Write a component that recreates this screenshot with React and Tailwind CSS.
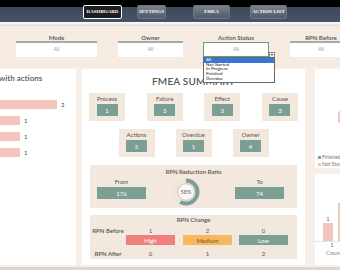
import React from "react";

const TEAL = "bg-[#7b9e95]";

function NavButton({ label, active, className }) {
  return (
    <div
      className={`h-[14px] flex items-center justify-center rounded-[2px] text-[5px] font-bold text-white whitespace-nowrap ${
        active
          ? "bg-[#1e1e1e] border border-white"
          : "bg-[linear-gradient(to_bottom,#7a828c,#505a66)] border border-[#6c7580]"
      } ${className}`}
      style={{ fontFamily: '"Liberation Serif", serif' }}
    >
      {label}
    </div>
  );
}

function Filter({ label, className, boxClass, children }) {
  return (
    <div className={`relative flex flex-col items-center pt-[8px] shrink-0 ${className}`}>
      <div className="text-[6px] leading-[7px] font-bold text-[#5c5c5c]">{label}</div>
      <div className={`w-full bg-white flex items-center justify-center text-[5px] text-[#9a9a9a] ${boxClass}`}>
        All
      </div>
      {children}
    </div>
  );
}

function Kpi({ label, value }) {
  return (
    <div className="w-[36px] h-[28px] bg-[#f3e8dd] flex flex-col items-center pt-[2px]">
      <div className="text-[6px] leading-[8px] text-[#555]">{label}</div>
      <div className={`mt-[1px] w-[21px] h-[12px] ${TEAL} text-white text-[6px] flex items-center justify-center`}>
        {value}
      </div>
    </div>
  );
}

function Donut() {
  const c = 2 * Math.PI * 11.5;
  return (
    <svg width="28" height="28" viewBox="0 0 28 28" className="shrink-0">
      <circle cx="14" cy="14" r="11.5" fill="none" stroke="#efe5db" strokeWidth="4" />
      <circle
        cx="14"
        cy="14"
        r="11.5"
        fill="none"
        stroke="#7b9e95"
        strokeWidth="4"
        strokeDasharray={`${c * 0.58} ${c}`}
        transform="rotate(-90 14 14)"
      />
      <circle cx="14" cy="14" r="8.3" fill="#fbf8f5" stroke="#a9a9a9" strokeWidth="0.6" />
      <text x="14" y="16" textAnchor="middle" fontSize="5.5" fill="#666">58%</text>
    </svg>
  );
}

export default function App() {
  return (
    <div
      className="w-[340px] h-[270px] overflow-hidden bg-[#f7efe8] flex flex-col"
      style={{ fontFamily: 'Lato, "DejaVu Sans", sans-serif' }}
    >
      {/* Nav */}
      <div className="h-[22px] shrink-0 flex items-start pt-[5px] pl-[83px] bg-[linear-gradient(to_bottom,#000_0,#000_7px,#3d4a5b_7px,#45536a_22px)]">
        <NavButton label="DASHBOARD" active className="w-[39px]" />
        <NavButton label="SETTINGS" className="w-[29px] ml-[15px]" />
        <NavButton label="FMEA" className="w-[37px] ml-[27px]" />
        <NavButton label="ACTION LIST" className="w-[37px] ml-[20px]" />
      </div>
      <div className="h-[4px] shrink-0 bg-[linear-gradient(to_bottom,#ffffff,#dcdcdc)]" />

      {/* Filters */}
      <div className="h-[41px] shrink-0 bg-[#f5ebe1] flex">
        <Filter label="Mode" className="w-[81px] ml-[16px]" boxClass="h-[16px] border-t-2 border-[#a3aea6]" />
        <Filter label="Owner" className="w-[65px] ml-[21px]" boxClass="h-[16px] border-t-2 border-[#a3aea6]" />
        <Filter label="Action Status" className="w-[66px] ml-[20px] z-10" boxClass="h-[15px] mt-[1px] border border-[#6f9b7c]">
          <div className="absolute left-[66px] top-[26px] w-[6px] h-[6px] bg-[#f0f0f0] border border-[#8a8a8a] flex items-center justify-center">
            <div className="w-0 h-0 border-l-[1.5px] border-r-[1.5px] border-t-[2px] border-l-transparent border-r-transparent border-t-[#333]" />
          </div>
          <div className="absolute left-0 top-[31px] w-[72px] h-[26px] bg-white border border-[#6a6a6a] text-[4.5px] leading-[4.7px] text-[#111]">
            <div className="bg-[#3875d7] text-white pl-[2px]">All</div>
            <div className="pl-[2px]">Not Started</div>
            <div className="pl-[2px]">In Progress</div>
            <div className="pl-[2px]">Finished</div>
            <div className="pl-[2px]">Overdue</div>
          </div>
        </Filter>
        <Filter label="RPN Before" className="w-[62px] ml-[21px]" boxClass="h-[16px] border-t-2 border-[#a3aea6]" />
      </div>

      {/* Main */}
      <div className="flex pt-[2px] shrink-0">
        {/* Left panel */}
        <div className="w-[76px] h-[196px] bg-white shrink-0 overflow-hidden">
          <div className="mt-[4px] -ml-[1px] text-[8px] leading-[10px] font-semibold text-[#555] whitespace-nowrap">
            with actions
          </div>
          <div className="mt-[17px] flex flex-col gap-[7px]">
            {[
              [57, "2"],
              [20, "1"],
              [20, "1"],
              [20, "1"],
            ].map(([w, v], i) => (
              <div key={i} className="flex items-center h-[9px]">
                <div className="h-[9px] bg-[#f4c5bf]" style={{ width: w }} />
                <span className="ml-[4px] text-[6px] text-[#444]">{v}</span>
              </div>
            ))}
          </div>
        </div>

        {/* Center panel */}
        <div className="w-[223px] h-[196px] bg-white ml-[6px] shrink-0 flex flex-col pt-[6px]">
          <div className="h-[12px] text-[10px] leading-[12px] text-center text-[#555] font-semibold tracking-[0.2px]">
            FMEA SUMMARY
          </div>
          <div className="mt-[6px] flex justify-between px-[7px]">
            <Kpi label="Process" value="1" />
            <Kpi label="Failure" value="3" />
            <Kpi label="Effect" value="3" />
            <Kpi label="Cause" value="3" />
          </div>
          <div className="mt-[8px] flex justify-center gap-[21px]">
            <Kpi label="Actions" value="5" />
            <Kpi label="Overdue" value="1" />
            <Kpi label="Owner" value="4" />
          </div>

          {/* RPN Reduction Ratio */}
          <div className="mt-[8px] mx-[8px] h-[43px] bg-[#f3e8dd] pt-[3px]">
            <div className="text-[6px] leading-[7px] text-center font-semibold text-[#555]">RPN Reduction Ratio</div>
            <div className="mt-[3px] flex items-start pl-[7px]">
              <div className="w-[49px] flex flex-col items-center">
                <div className="text-[6px] leading-[8px] text-[#555]">From</div>
                <div className={`mt-[1px] w-full h-[12px] ${TEAL} text-white text-[6px] flex items-center justify-center`}>176</div>
              </div>
              <div className="ml-[26px]">
                <Donut />
              </div>
              <div className="ml-[35px] w-[49px] flex flex-col items-center">
                <div className="text-[6px] leading-[8px] text-[#555]">To</div>
                <div className={`mt-[1px] w-full h-[12px] ${TEAL} text-white text-[6px] flex items-center justify-center`}>74</div>
              </div>
            </div>
          </div>

          {/* RPN Change */}
          <div className="mt-[7px] mx-[8px] h-[44px] bg-[#f3e8dd] pt-[1px] text-[6px] text-[#555]">
            <div className="leading-[7px] text-center font-semibold">RPN Change</div>
            <div className="mt-[4px] flex leading-[7px]">
              <span className="w-[36px] text-center font-semibold whitespace-nowrap">RPN Before</span>
              <span className="w-[49px] text-center">1</span>
              <span className="w-[49px] ml-[8px] text-center">2</span>
              <span className="w-[49px] ml-[7px] text-center">0</span>
            </div>
            <div className="mt-[1px] flex h-[10px]">
              <span className="w-[36px]" />
              <span className="w-[49px] bg-[#f08080] text-white flex items-center justify-center">High</span>
              <span className="w-[49px] ml-[8px] bg-[#f5b85f] text-[#7a5a2a] flex items-center justify-center">Medium</span>
              <span className="w-[49px] ml-[7px] bg-[#7b9e95] text-white flex items-center justify-center">Low</span>
            </div>
            <div className="mt-[5px] flex leading-[7px]">
              <span className="w-[36px] text-center font-semibold whitespace-nowrap">RPN After</span>
              <span className="w-[49px] text-center">0</span>
              <span className="w-[49px] ml-[8px] text-center">1</span>
              <span className="w-[49px] ml-[7px] text-center">2</span>
            </div>
          </div>
        </div>

        {/* Right panels */}
        <div className="ml-[10px] w-[40px] shrink-0 flex flex-col gap-[6px]">
          <div className="h-[99px] bg-white flex flex-col pl-[3px] overflow-hidden">
            <div className="mt-[42px] ml-[20px] w-[6px] h-[13px] bg-[#f4c5bf] rounded-l-[2px]" />
            <div className="mt-[31px] flex items-center gap-[1px] text-[5px] leading-[7px] text-[#777]">
              <span className="w-[3px] h-[3px] bg-[#7b9e95]" />
              Finished
            </div>
            <div className="flex items-center gap-[1px] text-[5px] leading-[7px] text-[#777]">
              <span className="w-[3px] h-[3px] bg-[#f4c5bf]" />
              Not Started
            </div>
          </div>
          <div className="h-[91px] bg-white overflow-hidden flex flex-col">
            <div className="mt-[29px] h-[38px] flex items-end pl-[8px] gap-[5px]">
              <div className="w-[10px] flex flex-col items-center">
                <span className="text-[5px] leading-[7px] text-[#444]">1</span>
                <div className="w-[10px] h-[18px] bg-[#f4c5bf]" />
              </div>
              <div className="w-[10px] h-[38px] bg-[#f4c5bf]" />
            </div>
            <div className="h-[1px] bg-[#e4e4e4]" />
            <div className="pl-[8px] w-[18px] text-center text-[5px] leading-[7px] text-[#555] box-content">1</div>
            <div className="pl-[11px] text-[6px] leading-[8px] text-[#888] whitespace-nowrap">Count</div>
          </div>
        </div>
      </div>

      <div className="flex-1" />
      <div className="h-[3px] shrink-0 bg-[#dcd7d2]" />
    </div>
  );
}
